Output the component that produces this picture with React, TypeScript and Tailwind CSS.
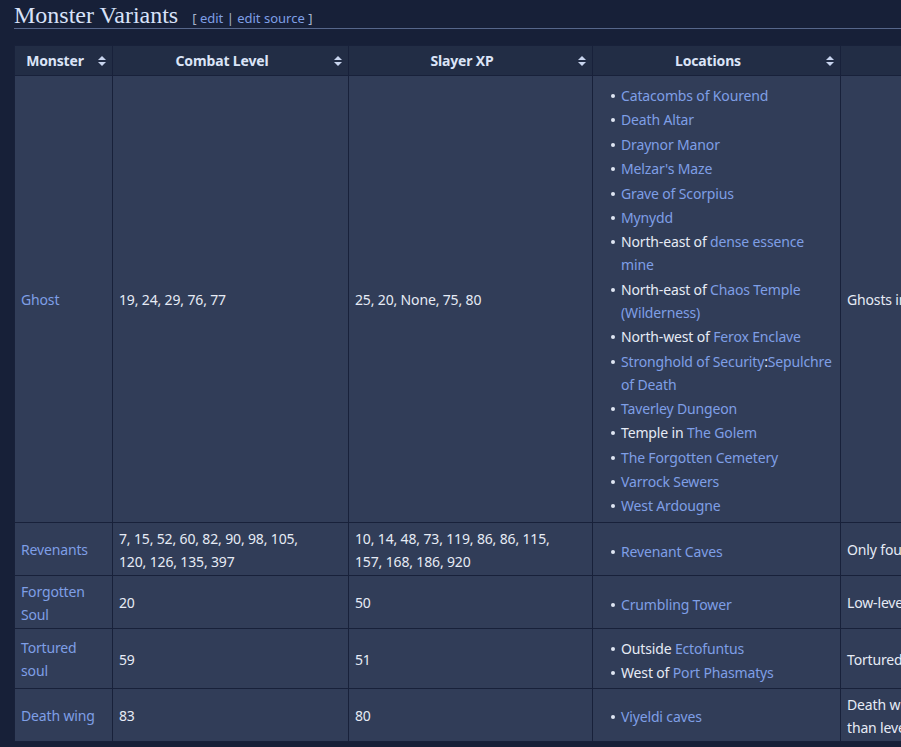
import React from "react";

const LINK = "text-[#7f9fe6]";
const TXT = "text-[#e6ebf5]";

function SortIcon() {
  return (
    <svg width="8" height="10" viewBox="0 0 8 10" className="shrink-0">
      <path d="M4 0 L8 4 L0 4 Z" fill="#c9d5ef" />
      <path d="M0 6 L8 6 L4 10 Z" fill="#c9d5ef" />
    </svg>
  );
}

function Head({ label }: { label: string }) {
  return (
    <div className="bg-[#222d45] flex items-center pl-[6px] pr-[6px] h-[29px]">
      <span className="flex-1 text-center font-bold text-[14px] text-[#dbe4f7]">{label}</span>
      <span className="ml-[9px] flex items-center">
        <SortIcon />
      </span>
    </div>
  );
}

type Part = { t: string; link?: boolean; nowrap?: boolean };

function Item({ parts }: { parts: Part[] }) {
  return (
    <li className="relative mb-[1.4px]">
      <span className="absolute left-[-10px] top-[10px] w-[4px] h-[4px] rounded-full bg-[#dfe6f3]" />
      {parts.map((p, i) => (
        <span key={i} className={(p.link ? LINK : TXT) + (p.nowrap ? " whitespace-nowrap" : "")}>
          {p.t}
        </span>
      ))}
    </li>
  );
}

function Cell({ children, className = "" }: { children: React.ReactNode; className?: string }) {
  return (
    <div className={"bg-[#313d58] flex items-center px-[6px] pt-[4px] pb-[2px] " + className}>
      <div className="w-full">{children}</div>
    </div>
  );
}

function Locs({ items }: { items: Part[][] }) {
  return (
    <ul className="mt-[4px] pl-[22px]">
      {items.map((p, i) => (
        <Item key={i} parts={p} />
      ))}
    </ul>
  );
}

const L = (t: string): Part => ({ t, link: true });
const T = (t: string): Part => ({ t });

export default function App() {
  return (
    <div
      className="min-h-[747px] w-[901px] bg-[#172038] overflow-hidden pl-[14px]"
      style={{ fontFamily: '"Noto Sans", "Open Sans", sans-serif' }}
    >
      <div className="mt-[1px] h-[28px] border-b border-[#56668a] flex items-baseline w-[900px]">
        <h2
          className="text-[24px] leading-[28px] text-[#d8e2f8]"
          style={{ fontFamily: '"Liberation Serif", serif' }}
        >
          Monster Variants
        </h2>
        <span className="ml-[14px] text-[13px] text-[#a7b3cc]">
          [ <span className={LINK}>edit</span> | <span className={LINK}>edit source</span> ]
        </span>
      </div>

      <div className="mt-[16px] w-[1200px]">
        <div className="grid grid-cols-[97px_235px_243px_247px_600px] gap-px bg-[#18213a] p-px text-[14px] leading-[23px] tracking-[-0.15px]">
          <Head label="Monster" />
          <Head label="Combat Level" />
          <Head label="Slayer XP" />
          <Head label="Locations" />
          <div className="bg-[#222d45]" />

          {/* Ghost */}
          <Cell><span className={LINK}>Ghost</span></Cell>
          <Cell><span className={TXT}>19, 24, 29, 76, 77</span></Cell>
          <Cell><span className={TXT}>25, 20, None, 75, 80</span></Cell>
          <div className="bg-[#313d58] px-[6px] pt-[4px] pb-[3px]">
            <Locs
              items={[
                [L("Catacombs of Kourend")],
                [L("Death Altar")],
                [L("Draynor Manor")],
                [L("Melzar's Maze")],
                [L("Grave of Scorpius")],
                [L("Mynydd")],
                [T("North-east of "), L("dense essence mine")],
                [T("North-east of "), L("Chaos Temple (Wilderness)")],
                [T("North-west of "), L("Ferox Enclave")],
                [
                  { t: "Stronghold of Security", link: true, nowrap: true },
                  { t: ":", nowrap: true },
                  { t: "Sepulchre", link: true, nowrap: true },
                  L(" of Death"),
                ],
                [L("Taverley Dungeon")],
                [T("Temple in "), L("The Golem")],
                [L("The Forgotten Cemetery")],
                [L("Varrock Sewers")],
                [L("West Ardougne")],
              ]}
            />
          </div>
          <Cell><span className={TXT + " whitespace-nowrap"}>Ghosts in the Catacombs of Kourend do not require a ghostspeak amulet.</span></Cell>

          {/* Revenants */}
          <Cell><span className={LINK}>Revenants</span></Cell>
          <Cell>
            <span className={TXT}>
              7, 15, 52, 60, 82, 90, 98, 105,
              <br />
              120, 126, 135, 397
            </span>
          </Cell>
          <Cell>
            <span className={TXT}>
              10, 14, 48, 73, 119, 86, 86, 115,
              <br />
              157, 168, 186, 920
            </span>
          </Cell>
          <Cell><Locs items={[[L("Revenant Caves")]]} /></Cell>
          <Cell><span className={TXT + " whitespace-nowrap"}>Only found in the Wilderness.</span></Cell>

          {/* Forgotten Soul */}
          <Cell><span className={LINK}>Forgotten Soul</span></Cell>
          <Cell><span className={TXT}>20</span></Cell>
          <Cell><span className={TXT}>50</span></Cell>
          <Cell><Locs items={[[L("Crumbling Tower")]]} /></Cell>
          <Cell><span className={TXT + " whitespace-nowrap"}>Low-level ghosts found in the Crumbling Tower.</span></Cell>

          {/* Tortured soul */}
          <Cell><span className={LINK}>Tortured soul</span></Cell>
          <Cell><span className={TXT}>59</span></Cell>
          <Cell><span className={TXT}>51</span></Cell>
          <Cell>
            <Locs items={[[T("Outside "), L("Ectofuntus")], [T("West of "), L("Port Phasmatys")]]} />
          </Cell>
          <Cell><span className={TXT + " whitespace-nowrap"}>Tortured souls are found near Port Phasmatys.</span></Cell>

          {/* Death wing */}
          <Cell><span className={LINK}>Death wing</span></Cell>
          <Cell><span className={TXT}>83</span></Cell>
          <Cell><span className={TXT}>80</span></Cell>
          <Cell><Locs items={[[L("Viyeldi caves")]]} /></Cell>
          <Cell>
            <span className={TXT + " whitespace-nowrap"}>
              Death wings are assigned as ghosts, although they are stronger
              <br />
              than level 80 ghosts.
            </span>
          </Cell>
        </div>
      </div>
    </div>
  );
}
